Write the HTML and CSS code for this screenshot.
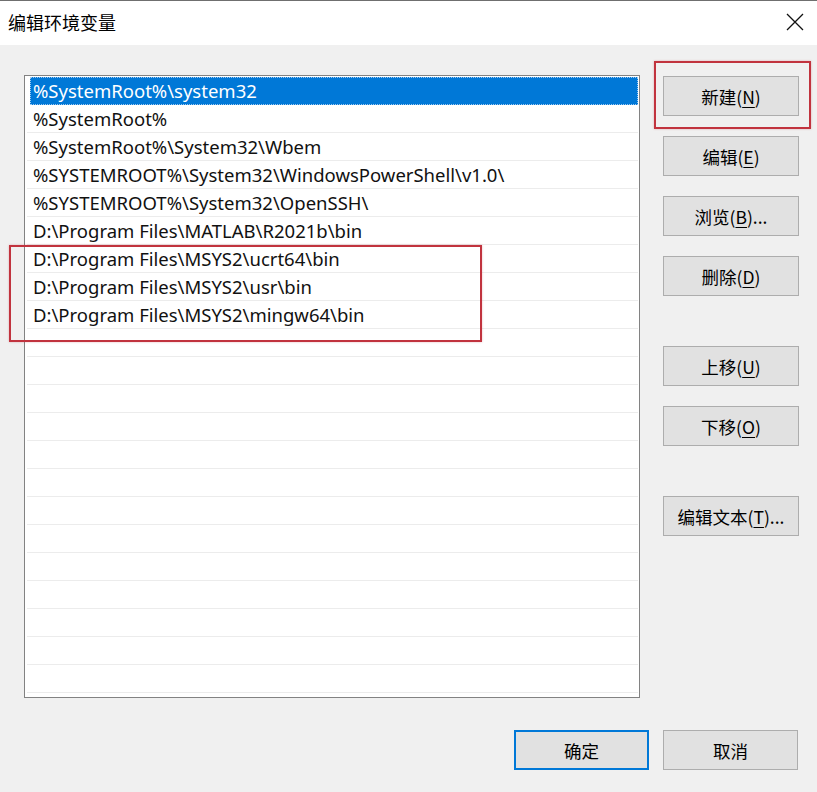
FILE: index.html
```html
<!DOCTYPE html>
<html lang="zh-CN">
<head>
<meta charset="utf-8">
<title>编辑环境变量</title>
<link rel="stylesheet" href="styles.css">
</head>
<body>
<div class="window">
  <div class="titlebar">
    <span class="title">编辑环境变量</span>
    <svg class="close" width="18" height="18" viewBox="0 0 18 18"><path d="M1 1 L17 17 M17 1 L1 17" stroke="#111" stroke-width="1.3" fill="none"/></svg>
  </div>
  <div class="content">
    <div class="main">
      <div class="listbox">
        <div class="row selected"><span>%SystemRoot%\system32</span></div>
        <div class="row"><span>%SystemRoot%</span></div>
        <div class="row"><span>%SystemRoot%\System32\Wbem</span></div>
        <div class="row"><span>%SYSTEMROOT%\System32\WindowsPowerShell\v1.0\</span></div>
        <div class="row"><span>%SYSTEMROOT%\System32\OpenSSH\</span></div>
        <div class="row"><span>D:\Program Files\MATLAB\R2021b\bin</span></div>
        <div class="row"><span>D:\Program Files\MSYS2\ucrt64\bin</span></div>
        <div class="row"><span>D:\Program Files\MSYS2\usr\bin</span></div>
        <div class="row"><span>D:\Program Files\MSYS2\mingw64\bin</span></div>
        <div class="row"></div><div class="row"></div><div class="row"></div>
        <div class="row"></div><div class="row"></div><div class="row"></div>
        <div class="row"></div><div class="row"></div><div class="row"></div>
        <div class="row"></div><div class="row"></div><div class="row"></div>
        <div class="row"></div>
        <div class="mark mark-list"></div>
      </div>
      <div class="side">
        <div class="btn-wrap">
          <button class="btn">新建(<u>N</u>)</button>
          <div class="mark mark-new"></div>
        </div>
        <button class="btn">编辑(<u>E</u>)</button>
        <button class="btn">浏览(<u>B</u>)...</button>
        <button class="btn">删除(<u>D</u>)</button>
        <button class="btn group">上移(<u>U</u>)</button>
        <button class="btn">下移(<u>O</u>)</button>
        <button class="btn group">编辑文本(<u>T</u>)...</button>
      </div>
    </div>
    <div class="footer">
      <button class="btn default">确定</button>
      <button class="btn">取消</button>
    </div>
  </div>
</div>
</body>
</html>
```

FILE: styles.css
```css
* { box-sizing: border-box; }
html, body { margin: 0; padding: 0; }
body {
  font-family: "Noto Sans", "Noto Sans CJK SC", sans-serif;
  background: #f0f0f0;
}
.window {
  width: 817px;
  height: 792px;
  background: #f0f0f0;
  display: flex;
  flex-direction: column;
  overflow: hidden;
}
.titlebar {
  height: 45px;
  background: #fff;
  border-top: 1px solid #6f6f6f;
  display: flex;
  align-items: center;
  justify-content: space-between;
  padding: 0 13px 0 8px;
}
.title {
  font-family: "Noto Sans CJK SC", sans-serif;
  font-size: 18px;
  color: #000;
  margin-top: -2px;
}
.close { display: block; margin-top: -3px; }
.content {
  flex: 1;
  display: flex;
  flex-direction: column;
  padding: 30px 0 0 24px;
}
.main {
  display: flex;
  gap: 23px;
}
.listbox {
  position: relative;
  width: 616px;
  height: 623px;
  background: #fff;
  border: 1px solid #828282;
  padding: 1px 0 0 1px;
  overflow: visible;
}
.row {
  height: 28px;
  margin-left: 1px;
  margin-right: 1px;
  border-bottom: 1px solid #ececec;
  display: flex;
  align-items: center;
  padding-left: 6px;
  font-size: 18.5px;
  color: #111;
  white-space: nowrap;
}
.row span { margin-top: -1px; }
.row.selected {
  background: #0078d7;
  color: #fff;
  margin-left: 4px;
  padding-left: 3px;
  border-bottom: none;
  outline: 1px dotted #9ec9f0;
  outline-offset: -1px;
}
.side {
  display: flex;
  flex-direction: column;
  gap: 20px;
  padding-top: 1px;
}
.btn {
  width: 136px;
  height: 40px;
  background: #e1e1e1;
  border: 1px solid #adadad;
  font-family: "Noto Sans CJK SC", sans-serif;
  font-size: 17.5px;
  color: #000;
  padding: 0;
  margin: 0;
  border-radius: 0;
}
.btn u { text-underline-offset: 3px; text-decoration-thickness: 1px; }
.btn.group { margin-top: 30px; }
.btn-wrap { position: relative; }
.btn-wrap .btn { display: block; }
.mark {
  position: absolute;
  border: 2px solid #c1333e;
  box-shadow: 0 0 2px rgba(193,51,62,0.35);
  pointer-events: none;
}
.mark-new {
  left: -9px;
  top: -15px;
  width: 157px;
  height: 68px;
}
.mark-list {
  left: -16px;
  top: 169px;
  width: 473px;
  height: 97px;
}
.footer {
  display: flex;
  justify-content: flex-end;
  gap: 14px;
  padding-right: 19px;
  margin-top: 32px;
}
.footer .btn { width: 135px; }
.btn.default {
  border: 2px solid #0078d7;
}
```
